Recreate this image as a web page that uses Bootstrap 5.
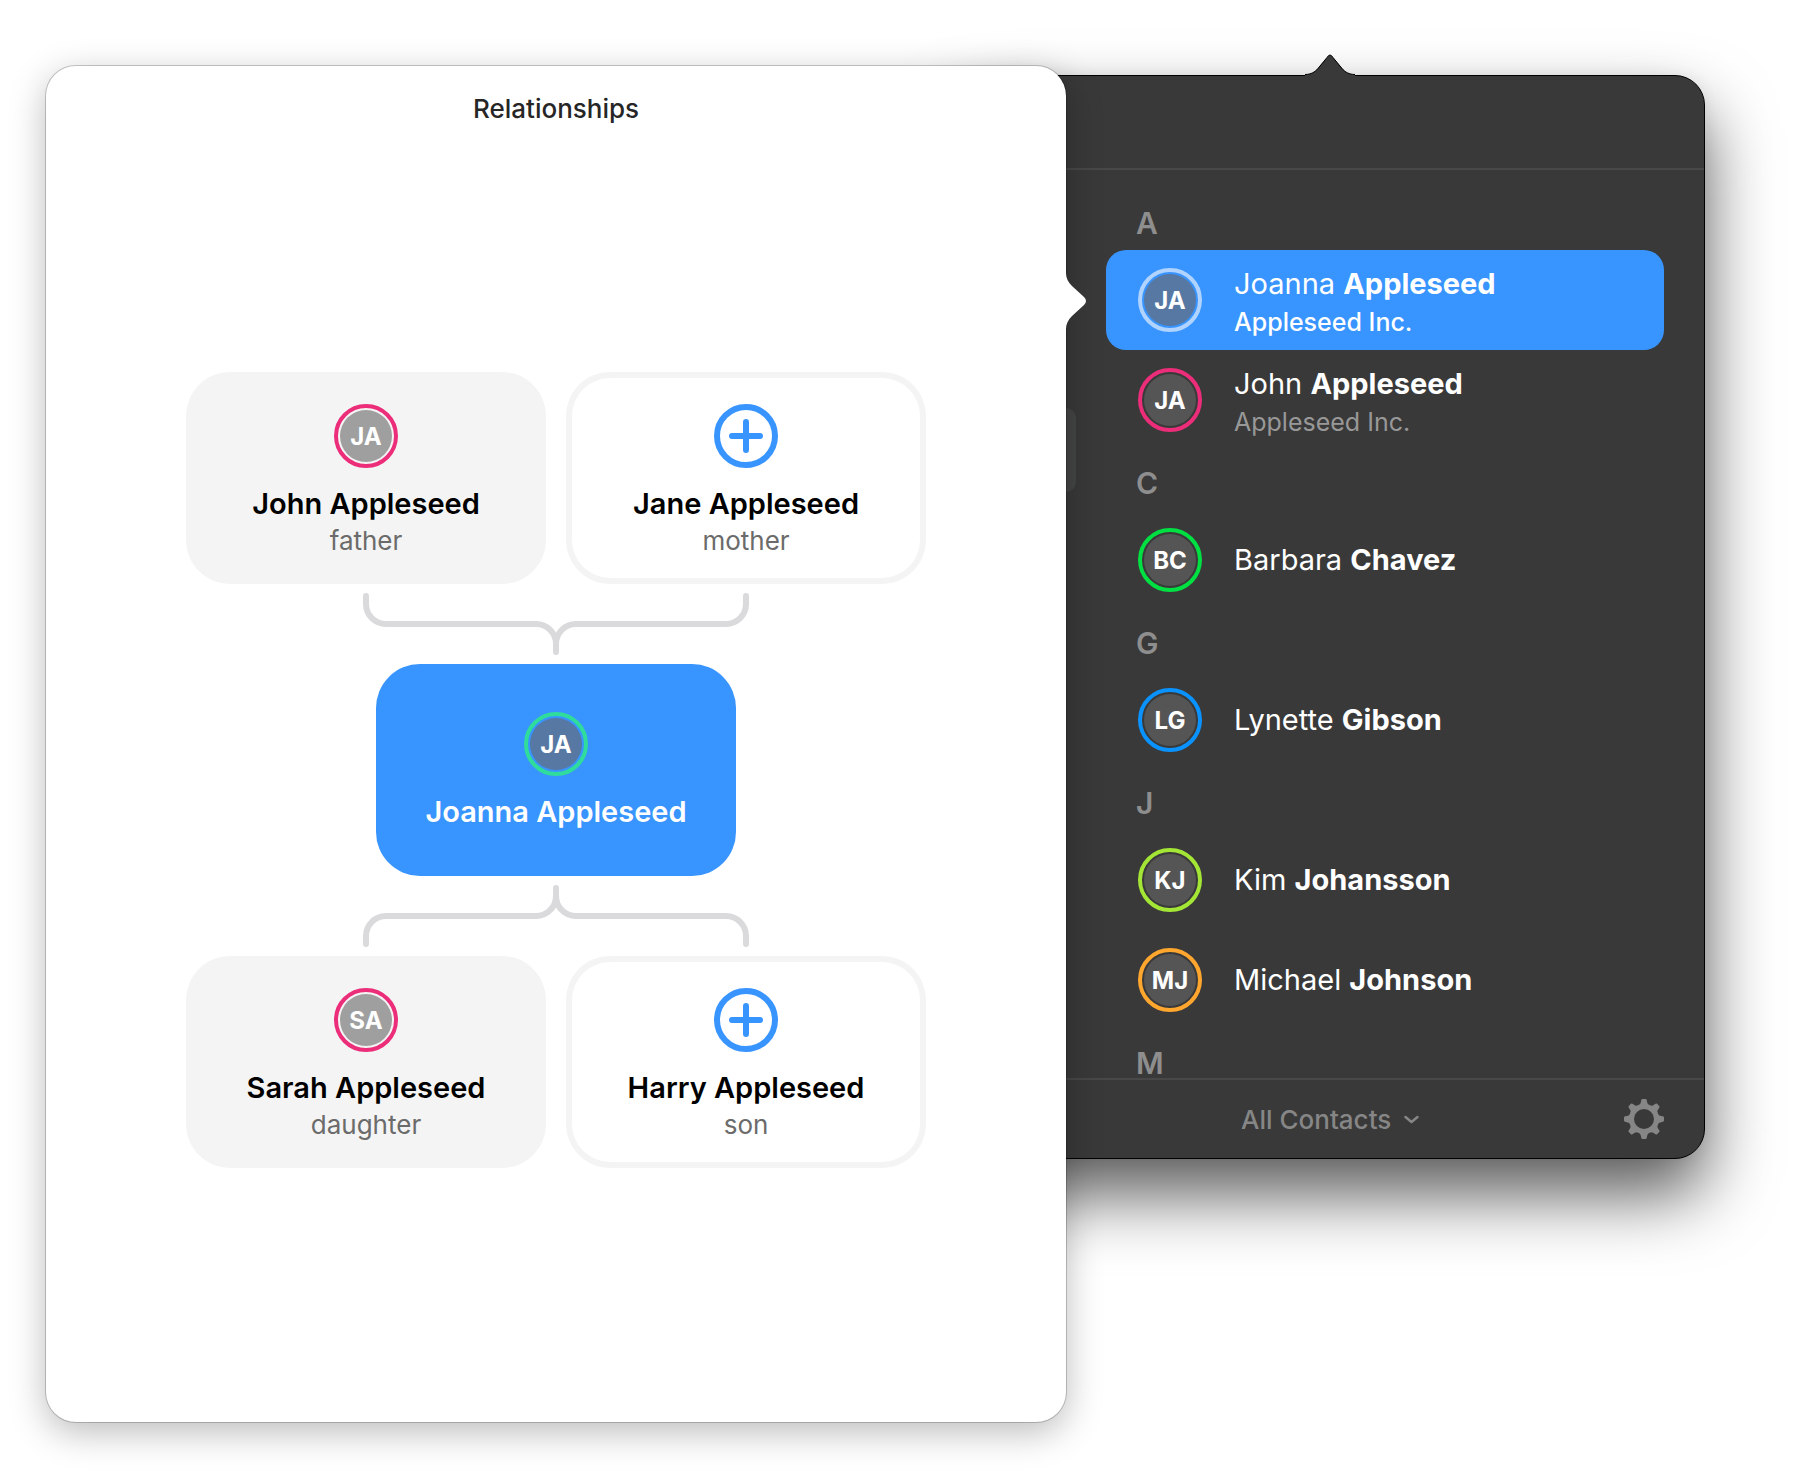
<!DOCTYPE html>
<html lang="en">
<head>
<meta charset="utf-8">
<meta name="viewport" content="width=device-width, initial-scale=1">
<title>Relationships</title>
<link href="https://cdn.jsdelivr.net/npm/bootstrap@5.3.0/dist/css/bootstrap.min.css" rel="stylesheet">
<style>
  :root { --accent: #3894ff; --panel: #393939; --line: #484848; }
  body { font-family: Inter, "Liberation Sans", sans-serif; background: #fff; }
  .stage { padding: 66px 111px 54px 46px; min-height: 100vh; }

  /* light popover */
  .tree-pop { flex: 1020 1 0; background: #fff; border-radius: 30px; z-index: 1;
    box-shadow: 0 0 0 1px rgba(0,0,0,.2), 0 10px 36px rgba(0,0,0,.27); }
  .tree-pop h1 { font-size: 26px; line-height: 28px; font-weight: 500; color: #262626; padding-top: 29px; }
  .side-arrow { left: 100%; top: 207px; }
  .tree-area { padding-bottom: 6px; }
  .tree { max-width: 740px; }
  .pair { gap: 20px; }
  .person { height: 212px; padding-top: 32px; border-radius: 44px; background: #f4f4f4;
    color: #000; text-decoration: none; }
  .person.ghost { background: #fff; box-shadow: inset 0 0 0 6px #f4f4f4; }
  .person.self { background: var(--accent); color: #fff; padding-top: 48px; width: 360px; }
  .person-name { font-size: 29px; line-height: 36px; font-weight: 600; margin-top: 18px; }
  .person-role { font-size: 26px; line-height: 38px; color: #6b6b6b; }

  .avatar { width: 64px; height: 64px; padding: 2px; border: 4px solid var(--ring); border-radius: 50%; flex: none; }
  .avatar span { width: 100%; height: 100%; padding-top: 2px; border-radius: 50%; background: var(--disc, #555);
    color: #fff; font-size: 24px; line-height: 24px; font-weight: 700; }

  /* dark popover */
  .list-pop { flex: 750 1 0; height: calc(100vh - 392px); margin: 9px 0 0 -111px; }
  .list-pop-body { height: 100%; background: var(--panel); border: 1px solid #000; border-radius: 30px;
    box-shadow: 0 36px 68px rgba(0,0,0,.64), 0 0 16px rgba(0,0,0,.06); }
  .top-arrow { left: 50%; bottom: calc(100% - 1px); transform: translateX(-50%); }
  .pop-head { height: 94px; border-bottom: 2px solid var(--line); }
  .gutter { width: 120px; padding-top: 238px; flex: none; }
  .gutter-tab { height: 84px; background: #444545; border-radius: 10px; }
  .people { padding: 20px 40px 0 30px; }
  .letter { font-size: 30px; line-height: 30px; font-weight: 600; color: #8e8e8e; padding: 18px 30px 12px; margin: 0; }
  .letter:last-child { padding-bottom: 0; }
  .entry { height: 100px; padding: 0 32px; gap: 32px; border-radius: 20px; color: #fff; text-decoration: none; }
  .entry.current { background: var(--accent); }
  .entry-text { padding-top: 4px; }
  .entry-name { font-size: 29px; line-height: 38px; }
  .entry-org { font-size: 25px; line-height: 34px; margin-top: 2px; color: #989898; }
  .entry.current .entry-org { color: #fff; font-weight: 500; }
  .pop-foot { height: 80px; border-top: 2px solid var(--line); padding: 0 40px; color: #868686; }
  .pop-foot select { appearance: none; border: 0; background: none; color: inherit; padding: 0;
    font-size: 26px; font-weight: 500; }
  .foot-group { gap: 12px; }
  .foot-side { width: 40px; }
  .pop-foot button { border: 0; background: none; color: inherit; height: 40px; padding: 0; }
</style>
<script src="https://cdn.jsdelivr.net/npm/bootstrap@5.3.0/dist/js/bootstrap.bundle.min.js"></script>
</head>
<body>
<div class="stage d-flex">

  <main class="tree-pop position-relative d-flex flex-column">
    <h1 class="text-center m-0">Relationships</h1>
    <svg class="side-arrow position-absolute" width="22" height="56" viewBox="0 0 22 56" aria-hidden="true">
      <path fill="#fff" d="M-1 0H0C0 5 2 9 6 13L18 24Q22 28 18 32L6 43C2 47 0 51 0 56H-1Z"/>
    </svg>
    <div class="tree-area flex-grow-1 d-flex align-items-center justify-content-center">
      <div class="tree w-100">
        <div class="pair d-flex">
          <a href="#" class="person w-50 d-flex flex-column align-items-center">
            <div class="avatar" style="--ring:#ec2d7a;--disc:#9f9f9f"><span class="d-flex align-items-center justify-content-center">JA</span></div>
            <div class="person-name">John Appleseed</div>
            <div class="person-role">father</div>
          </a>
          <a href="#" class="person ghost w-50 d-flex flex-column align-items-center">
            <svg width="64" height="64" viewBox="0 0 64 64" fill="none" stroke="#3894ff" stroke-width="6" stroke-linecap="round" aria-hidden="true"><circle cx="32" cy="32" r="29"/><path d="M18 32H46M32 18V46"/></svg>
            <div class="person-name">Jane Appleseed</div>
            <div class="person-role">mother</div>
          </a>
        </div>
        <svg class="d-block w-100" height="80" viewBox="0 0 740 80" fill="none" stroke="#dadadc" stroke-width="6" stroke-linecap="round" aria-hidden="true">
          <path d="M180 12V20A20 20 0 0 0 200 40H350A20 20 0 0 1 370 60V68M560 12V20A20 20 0 0 1 540 40H390A20 20 0 0 0 370 60"/>
        </svg>
        <a href="#" class="person self mx-auto d-flex flex-column align-items-center">
          <div class="avatar" style="--ring:#2fdc9c;--disc:#5678a3"><span class="d-flex align-items-center justify-content-center">JA</span></div>
          <div class="person-name">Joanna Appleseed</div>
        </a>
        <svg class="d-block w-100" height="80" viewBox="0 0 740 80" fill="none" stroke="#dadadc" stroke-width="6" stroke-linecap="round" aria-hidden="true">
          <path d="M180 68V60A20 20 0 0 1 200 40H350A20 20 0 0 0 370 20V12M560 68V60A20 20 0 0 0 540 40H390A20 20 0 0 1 370 20"/>
        </svg>
        <div class="pair d-flex">
          <a href="#" class="person w-50 d-flex flex-column align-items-center">
            <div class="avatar" style="--ring:#ec2d7a;--disc:#9f9f9f"><span class="d-flex align-items-center justify-content-center">SA</span></div>
            <div class="person-name">Sarah Appleseed</div>
            <div class="person-role">daughter</div>
          </a>
          <a href="#" class="person ghost w-50 d-flex flex-column align-items-center">
            <svg width="64" height="64" viewBox="0 0 64 64" fill="none" stroke="#3894ff" stroke-width="6" stroke-linecap="round" aria-hidden="true"><circle cx="32" cy="32" r="29"/><path d="M18 32H46M32 18V46"/></svg>
            <div class="person-name">Harry Appleseed</div>
            <div class="person-role">son</div>
          </a>
        </div>
      </div>
    </div>
  </main>

  <aside class="list-pop position-relative">
    <div class="list-pop-body d-flex flex-column">
      <div class="pop-head flex-shrink-0"></div>
      <div class="flex-grow-1 d-flex overflow-hidden">
        <div class="gutter"><div class="gutter-tab"></div></div>
        <nav class="people flex-grow-1" aria-label="Contacts">
          <h2 class="letter">A</h2>
          <a href="#" class="entry current d-flex align-items-center" aria-current="true">
            <div class="avatar" style="--ring:#b0d4ff;--disc:#5678a3"><span class="d-flex align-items-center justify-content-center">JA</span></div>
            <div class="entry-text"><div class="entry-name">Joanna <b>Appleseed</b></div><div class="entry-org">Appleseed Inc.</div></div>
          </a>
          <a href="#" class="entry d-flex align-items-center">
            <div class="avatar" style="--ring:#ec2d7a"><span class="d-flex align-items-center justify-content-center">JA</span></div>
            <div class="entry-text"><div class="entry-name">John <b>Appleseed</b></div><div class="entry-org">Appleseed Inc.</div></div>
          </a>
          <h2 class="letter">C</h2>
          <a href="#" class="entry d-flex align-items-center">
            <div class="avatar" style="--ring:#00e042"><span class="d-flex align-items-center justify-content-center">BC</span></div>
            <div class="entry-name">Barbara <b>Chavez</b></div>
          </a>
          <h2 class="letter">G</h2>
          <a href="#" class="entry d-flex align-items-center">
            <div class="avatar" style="--ring:#0a93ff"><span class="d-flex align-items-center justify-content-center">LG</span></div>
            <div class="entry-name">Lynette <b>Gibson</b></div>
          </a>
          <h2 class="letter">J</h2>
          <a href="#" class="entry d-flex align-items-center">
            <div class="avatar" style="--ring:#a3e635"><span class="d-flex align-items-center justify-content-center">KJ</span></div>
            <div class="entry-name">Kim <b>Johansson</b></div>
          </a>
          <a href="#" class="entry d-flex align-items-center">
            <div class="avatar" style="--ring:#ffa62e"><span class="d-flex align-items-center justify-content-center">MJ</span></div>
            <div class="entry-name">Michael <b>Johnson</b></div>
          </a>
          <h2 class="letter">M</h2>
        </nav>
      </div>
      <div class="pop-foot flex-shrink-0 d-flex align-items-center justify-content-between">
        <div class="foot-side"></div>
        <div class="foot-group d-flex align-items-center">
          <select aria-label="Contact group"><option>All Contacts</option></select>
          <svg width="15" height="9" viewBox="0 0 15 9" fill="none" stroke="currentColor" stroke-width="2.500" stroke-linecap="round" stroke-linejoin="round" aria-hidden="true"><path d="M1.500 2L7.500 7L13.500 2"/></svg>
        </div>
        <button type="button" class="foot-side" aria-label="Settings">
          <svg class="d-block" width="40" height="40" viewBox="-20 -20 40 40" fill="currentColor" aria-hidden="true">
            <circle r="12.500" fill="none" stroke="currentColor" stroke-width="5"/>
            <defs><path id="tooth" d="M-6 -13.500C-3.500 -14.500 -3.200 -16 -2.700 -19Q-2.500 -20 -1.500 -20H1.500Q2.500 -20 2.700 -19C3.200 -16 3.500 -14.500 6 -13.500Z"/></defs>
            <use href="#tooth"/><use href="#tooth" transform="rotate(45)"/><use href="#tooth" transform="rotate(90)"/><use href="#tooth" transform="rotate(135)"/>
            <use href="#tooth" transform="rotate(180)"/><use href="#tooth" transform="rotate(225)"/><use href="#tooth" transform="rotate(270)"/><use href="#tooth" transform="rotate(315)"/>
          </svg>
        </button>
      </div>
    </div>
    <svg class="top-arrow position-absolute" width="50" height="22" viewBox="0 0 50 22" aria-hidden="true">
      <path fill="#393939" d="M0 22V20.500C6 20.500 10 18 13 14L22 3.500Q25 -1.500 28 3.500L37 14C40 18 44 20.500 50 20.500V22Z"/>
      <path fill="none" stroke="#000" d="M0 20.500C6 20.500 10 18 13 14.500L22 3.500Q25 -1.500 28 3.500L37 14.500C40 18 44 20.500 50 20.500"/>
    </svg>
  </aside>

</div>
</body>
</html>
